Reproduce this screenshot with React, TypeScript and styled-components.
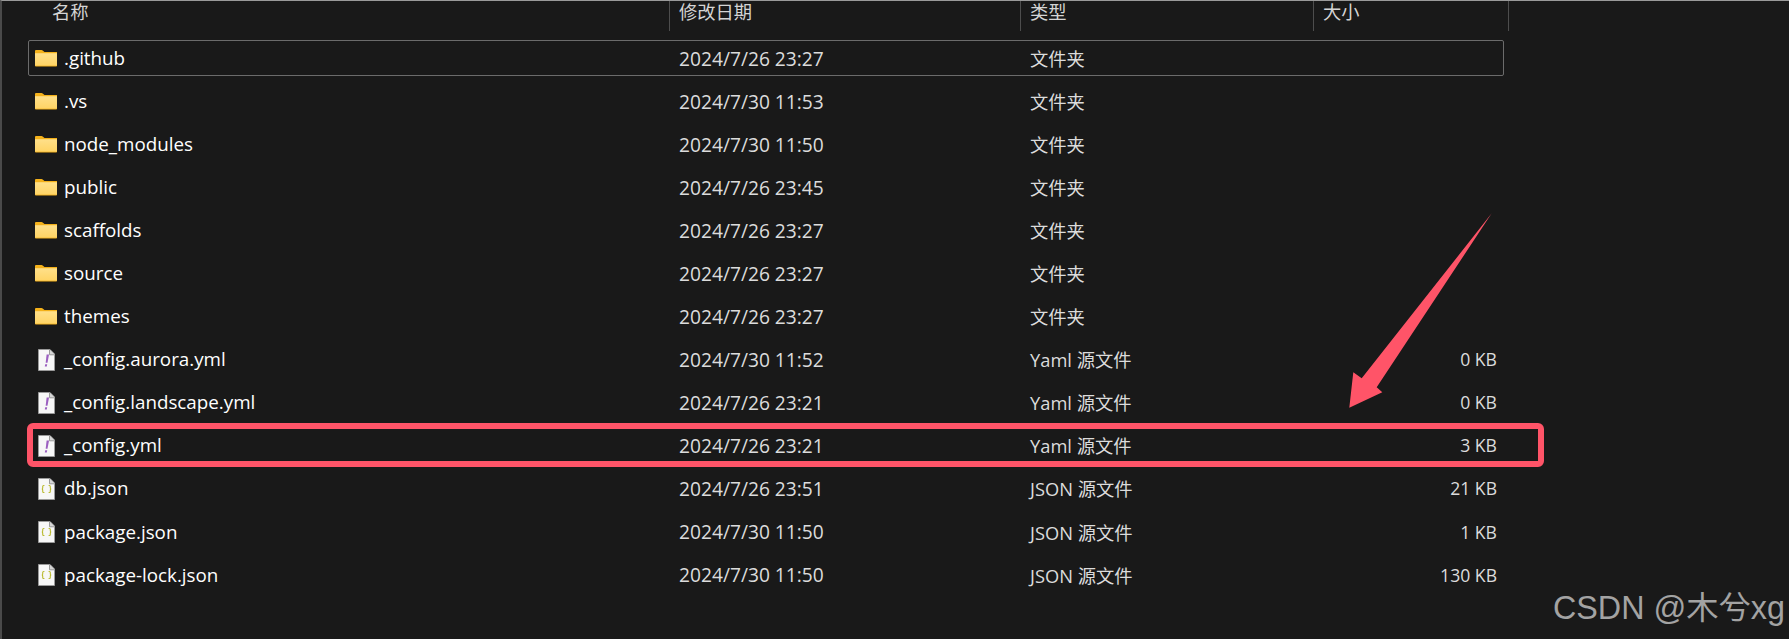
import React from "react";
import styled, { createGlobalStyle } from "styled-components";

const Global = createGlobalStyle`
  html, body { margin: 0; padding: 0; background: #191919; }
`;

const FONT = `"Open Sans", "Noto Sans CJK SC", sans-serif`;

const Page = styled.div`
  position: relative;
  width: 1789px;
  height: 639px;
  overflow: hidden;
  box-sizing: border-box;
  background: #191919;
  border-top: 1px solid #9a9a9a;
  border-left: 2px solid #4a4a4a;
  font-family: ${FONT};
  color: #ffffff;
`;

const EdgeMark = styled.div`
  position: absolute;
  left: -2px;
  top: 116px;
  width: 2px;
  height: 14px;
  background: #4350a8;
`;

const Header = styled.div`
  display: grid;
  grid-template-columns: 667px 351px 293px 195px;
  height: 30px;
  margin-bottom: 9px;
  font-size: 18.3px;
  color: #d4d4d4;
`;

const HeadCell = styled.div<{ $first?: boolean }>`
  display: flex;
  align-items: flex-start;
  box-sizing: border-box;
  height: 30px;
  line-height: 22px;
  padding-left: ${(p) => (p.$first ? "50px" : "9px")};
  border-left: ${(p) => (p.$first ? "none" : "1px solid #4d4d4d")};
`;

const EndCap = styled.div`
  position: absolute;
  left: 1506px;
  top: 0;
  width: 1px;
  height: 30px;
  background: #4d4d4d;
`;

const List = styled.div`
  display: flex;
  flex-direction: column;
  gap: 7.06px;
  margin-left: 26px;
  width: 1476px;
`;

const Row = styled.div<{ $focused?: boolean }>`
  display: grid;
  grid-template-columns: 650px 351px 291px 176px;
  align-items: center;
  box-sizing: border-box;
  height: 36px;
  border: 1px solid ${(p) => (p.$focused ? "#6b6b6b" : "transparent")};
  border-radius: 2px;
`;

const NameCell = styled.div`
  display: flex;
  align-items: center;
  gap: 7px;
  padding-left: 6px;
  color: #ffffff;
  font-size: 18.8px;
`;

const IconSlot = styled.div`
  display: flex;
  justify-content: center;
  align-items: center;
  width: 22px;
  height: 24px;
  padding-top: 1px;
`;

const MetaCell = styled.div<{ $size?: number }>`
  color: #dcdcdc;
  white-space: nowrap;
  font-size: ${(p) => p.$size ?? 18.3}px;
`;

const SizeCell = styled(MetaCell)`
  text-align: right;
`;

const Highlight = styled.div`
  position: absolute;
  left: 25px;
  top: 422px;
  width: 1517px;
  height: 44px;
  box-sizing: border-box;
  border: 6px solid #ff5468;
  border-radius: 6px;
`;

const Arrow = styled.svg`
  position: absolute;
  left: 0;
  top: 0;
`;

const Watermark = styled.div`
  position: absolute;
  left: 1551px;
  top: 587px;
  font-family: "Liberation Sans", "Noto Sans CJK SC", sans-serif;
  font-size: 32.3px;
  line-height: 40px;
  color: #a3a3a3;
  white-space: nowrap;
`;

const FolderIcon = () => (
  <svg width="22" height="17" viewBox="0 0 22 18" preserveAspectRatio="none">
    <defs>
      <linearGradient id="fold" x1="0" y1="0" x2="0" y2="1">
        <stop offset="0" stopColor="#ffe08a" />
        <stop offset="1" stopColor="#ffd465" />
      </linearGradient>
    </defs>
    <path d="M0 1.2C0 .5.5 0 1.2 0h5.3c.5 0 .9.2 1.2.5L9.5 2.2H22v3H0z" fill="#f5b21b" />
    <rect x="0" y="2.6" width="22" height="15" rx="0.8" fill="#f2ad18" />
    <rect x="0" y="3.4" width="22" height="13.2" fill="url(#fold)" />
  </svg>
);

const FileBase = ({ children }: { children: React.ReactNode }) => (
  <svg width="17" height="22" viewBox="0 0 17 22">
    <path d="M.5.5h11.5l4.5 4.5v16.5H.5z" fill="#f7f7f7" stroke="#9a9a9a" />
    <path d="M11.5.8v5h5" fill="#d6d6d6" stroke="#9a9a9a" />
    {children}
  </svg>
);

const YamlIcon = () => (
  <FileBase>
    <path d="M8.6 5.5h2.4l-1.5 8.2H7.7z" fill="#9b5fc0" />
    <path d="M7.2 15.3h2l-.4 2.2h-2z" fill="#9b5fc0" />
  </FileBase>
);

const JsonIcon = () => (
  <FileBase>
    <path
      d="M6.4 7.5H5.6c-.7 0-.9.4-.9 1v1.6c0 .6-.3.9-.9.9.6 0 .9.3.9.9v1.6c0 .6.2 1 .9 1h.8M10.6 7.5h.8c.7 0 .9.4.9 1v1.6c0 .6.3.9.9.9-.6 0-.9.3-.9.9v1.6c0 .6-.2 1-.9 1h-.8"
      fill="none"
      stroke="#b9b92e"
      strokeWidth="1.1"
    />
  </FileBase>
);

type Kind = "folder" | "yaml" | "json";
type Entry = { name: string; date: string; type: string; size?: string; kind: Kind; focused?: boolean };

const entries: Entry[] = [
  { name: ".github", date: "2024/7/26 23:27", type: "文件夹", kind: "folder", focused: true },
  { name: ".vs", date: "2024/7/30 11:53", type: "文件夹", kind: "folder" },
  { name: "node_modules", date: "2024/7/30 11:50", type: "文件夹", kind: "folder" },
  { name: "public", date: "2024/7/26 23:45", type: "文件夹", kind: "folder" },
  { name: "scaffolds", date: "2024/7/26 23:27", type: "文件夹", kind: "folder" },
  { name: "source", date: "2024/7/26 23:27", type: "文件夹", kind: "folder" },
  { name: "themes", date: "2024/7/26 23:27", type: "文件夹", kind: "folder" },
  { name: "_config.aurora.yml", date: "2024/7/30 11:52", type: "Yaml 源文件", size: "0 KB", kind: "yaml" },
  { name: "_config.landscape.yml", date: "2024/7/26 23:21", type: "Yaml 源文件", size: "0 KB", kind: "yaml" },
  { name: "_config.yml", date: "2024/7/26 23:21", type: "Yaml 源文件", size: "3 KB", kind: "yaml" },
  { name: "db.json", date: "2024/7/26 23:51", type: "JSON 源文件", size: "21 KB", kind: "json" },
  { name: "package.json", date: "2024/7/30 11:50", type: "JSON 源文件", size: "1 KB", kind: "json" },
  { name: "package-lock.json", date: "2024/7/30 11:50", type: "JSON 源文件", size: "130 KB", kind: "json" },
];

const icons: Record<Kind, React.ComponentType> = {
  folder: FolderIcon,
  yaml: YamlIcon,
  json: JsonIcon,
};

export default function App() {
  return (
    <Page>
      <Global />
      <EdgeMark />
      <Header>
        <HeadCell $first>名称</HeadCell>
        <HeadCell>修改日期</HeadCell>
        <HeadCell>类型</HeadCell>
        <HeadCell>大小</HeadCell>
      </Header>
      <EndCap />
      <List>
        {entries.map((e) => {
          const Icon = icons[e.kind];
          return (
            <Row key={e.name} $focused={e.focused}>
              <NameCell>
                <IconSlot>
                  <Icon />
                </IconSlot>
                {e.name}
              </NameCell>
              <MetaCell $size={19.2}>{e.date}</MetaCell>
              <MetaCell>{e.type}</MetaCell>
              <SizeCell $size={17.6}>{e.size}</SizeCell>
            </Row>
          );
        })}
      </List>
      <Highlight />
      <Arrow width="1789" height="639" viewBox="0 0 1789 639">
        <polygon
          points="1489.7,212.3 1374.7,386.3 1380.3,391.3 1347.3,406.7 1351.3,371.3 1359.7,377.3"
          fill="#ff5468"
        />
      </Arrow>
      <Watermark>CSDN @木兮xg</Watermark>
    </Page>
  );
}
